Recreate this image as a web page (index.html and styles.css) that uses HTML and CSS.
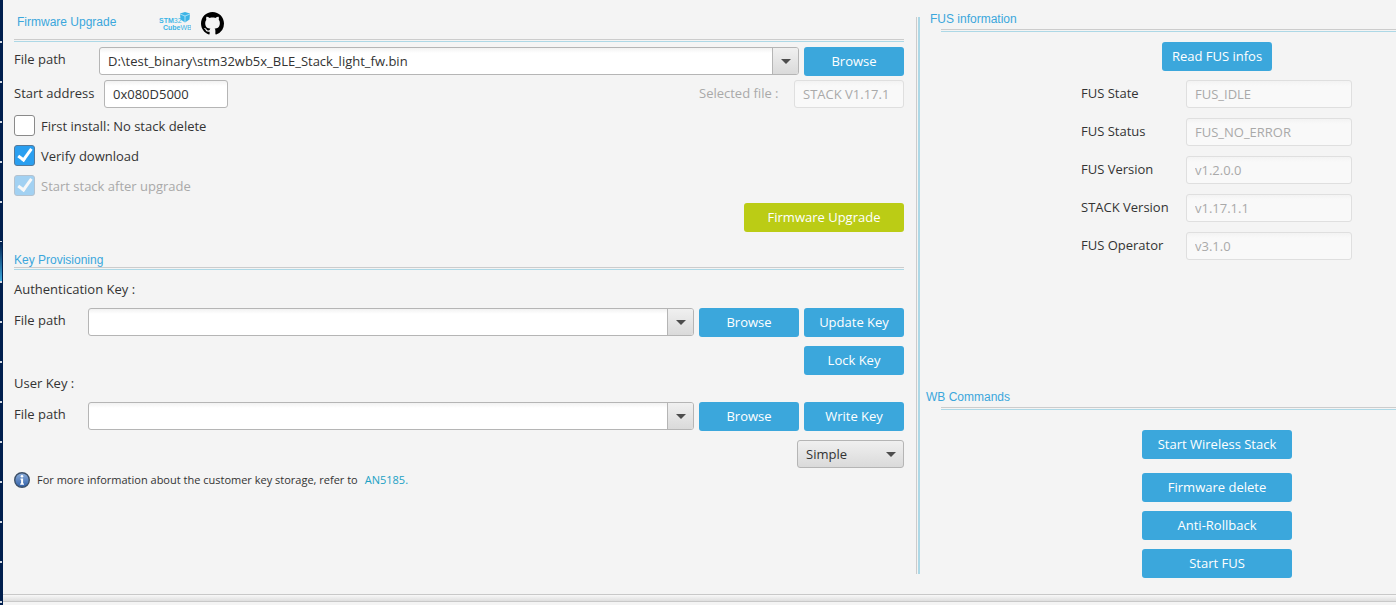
FILE: index.html
```html
<!DOCTYPE html>
<html lang="en">
<head>
<meta charset="UTF-8">
<meta name="viewport" content="width=device-width, initial-scale=1.0">
<title>Firmware Upgrade Services</title>
<link rel="stylesheet" href="styles.css">
</head>
<body>
<div class="window">
    <div class="sidebar"><div class="sidebar-active"></div></div>
    <div class="page">
        <main class="panels">
            <div class="left">
                <section>
                    <div class="title-row">
                        <h2>Firmware Upgrade</h2>
                        <svg class="cube-logo" width="32" height="20" viewBox="0 0 32 20" role="img" aria-label="STM32CubeWB">
                            <text x="0" y="11" font-size="7" font-weight="bold">STM<tspan font-weight="normal">32</tspan></text>
                            <text x="4" y="18" font-size="7" font-weight="bold">Cube<tspan font-weight="normal">WB</tspan></text>
                            <path d="M21 1.5 L26 0 L31 1.5 L30.5 7.5 L26 10.5 L21.5 7.5 Z"/>
                            <path class="cube-edge" d="M21 2 L26 4 L31 2 M26 4 V10"/>
                        </svg>
                        <svg class="github-logo" width="23" height="23" viewBox="0 0 16 16" role="img" aria-label="GitHub">
                            <path d="M8 0C3.58 0 0 3.58 0 8c0 3.54 2.29 6.53 5.47 7.59.4.07.55-.17.55-.38 0-.19-.01-.82-.01-1.49-2.01.37-2.53-.49-2.69-.94-.09-.23-.48-.94-.82-1.13-.28-.15-.68-.52-.01-.53.63-.01 1.08.58 1.23.82.72 1.21 1.87.87 2.33.66.07-.52.28-.87.51-1.07-1.78-.2-3.64-.89-3.64-3.95 0-.87.31-1.59.82-2.15-.08-.2-.36-1.02.08-2.12 0 0 .67-.21 2.2.82.64-.18 1.32-.27 2-.27s1.36.09 2 .27c1.53-1.04 2.2-.82 2.2-.82.44 1.1.16 1.92.08 2.12.51.56.82 1.27.82 2.15 0 3.07-1.87 3.75-3.65 3.95.29.25.54.73.54 1.48 0 1.07-.01 1.93-.01 2.2 0 .21.15.46.55.38A8.01 8.01 0 0 0 16 8c0-4.42-3.58-8-8-8z"/>
                        </svg>
                    </div>
                    <div class="rule"></div>

                    <div class="row firmware-path">
                        <label for="fwPath">File path</label>
                        <div class="combo">
                            <input type="text" id="fwPath" value="D:\test_binary\stm32wb5x_BLE_Stack_light_fw.bin">
                            <button type="button" aria-label="Recent firmware files"></button>
                        </div>
                        <button type="button" class="btn">Browse</button>
                    </div>
                    <div class="row address">
                        <label for="startAddress">Start address</label>
                        <input type="text" class="field" id="startAddress" value="0x080D5000">
                        <label for="selectedFile" class="selected-label">Selected file :</label>
                        <input type="text" class="field selected-file" id="selectedFile" value="STACK V1.17.1" disabled>
                    </div>

                    <div class="checks">
                        <label><input type="checkbox">First install: No stack delete</label>
                        <label><input type="checkbox" checked>Verify download</label>
                        <label class="disabled"><input type="checkbox" checked disabled>Start stack after upgrade</label>
                    </div>
                    <div class="row end">
                        <button type="button" class="btn upgrade">Firmware Upgrade</button>
                    </div>
                </section>

                <section class="keys">
                    <h2>Key Provisioning</h2>
                    <div class="rule"></div>

                    <h3>Authentication Key :</h3>
                    <div class="row key-path">
                        <label for="authKey">File path</label>
                        <div class="combo">
                            <input type="text" id="authKey">
                            <button type="button" aria-label="Recent authentication keys"></button>
                        </div>
                        <button type="button" class="btn">Browse</button>
                        <button type="button" class="btn">Update Key</button>
                    </div>
                    <div class="row end lock">
                        <button type="button" class="btn">Lock Key</button>
                    </div>

                    <h3 class="user-key">User Key :</h3>
                    <div class="row key-path">
                        <label for="userKey">File path</label>
                        <div class="combo">
                            <input type="text" id="userKey">
                            <button type="button" aria-label="Recent user keys"></button>
                        </div>
                        <button type="button" class="btn">Browse</button>
                        <button type="button" class="btn">Write Key</button>
                    </div>
                    <div class="row end key-type">
                        <div class="select">
                            <select aria-label="Key type">
                                <option>Simple</option>
                                <option>Master</option>
                                <option>Encrypted</option>
                            </select>
                        </div>
                    </div>

                    <p class="note">
                        <svg width="16" height="16" viewBox="0 0 16 16" aria-hidden="true">
                            <defs>
                                <linearGradient id="infoFill" x1="0" y1="0" x2="0" y2="1">
                                    <stop offset="0" stop-color="#8fb0dc"/>
                                    <stop offset="1" stop-color="#2f5fa8"/>
                                </linearGradient>
                            </defs>
                            <circle cx="8" cy="8" r="7.3" fill="url(#infoFill)" stroke="#3d5068" stroke-width="1.4"/>
                            <circle cx="8" cy="4.2" r="1.3" fill="#fff"/>
                            <path d="M6.5 6.5h2.6v5h.9v1.2H6.2v-1.2h.9V7.7h-.6z" fill="#fff"/>
                        </svg>
                        <span>For more information about the customer key storage, refer to</span>
                        <a href="#">AN5185.</a>
                    </p>
                </section>
            </div>

            <div class="divider"></div>

            <div class="right">
                <section class="fus">
                    <h2>FUS information</h2>
                    <div class="rule"></div>
                    <div class="centered">
                        <button type="button" class="btn read">Read FUS infos</button>
                        <div class="info">
                            <label for="fusState">FUS State</label>
                            <input type="text" class="field" id="fusState" value="FUS_IDLE" disabled>
                            <label for="fusStatus">FUS Status</label>
                            <input type="text" class="field" id="fusStatus" value="FUS_NO_ERROR" disabled>
                            <label for="fusVersion">FUS Version</label>
                            <input type="text" class="field" id="fusVersion" value="v1.2.0.0" disabled>
                            <label for="stackVersion">STACK Version</label>
                            <input type="text" class="field" id="stackVersion" value="v1.17.1.1" disabled>
                            <label for="fusOperator">FUS Operator</label>
                            <input type="text" class="field" id="fusOperator" value="v3.1.0" disabled>
                        </div>
                    </div>
                </section>
                <section class="commands">
                    <h2>WB Commands</h2>
                    <div class="rule"></div>
                    <div class="centered">
                        <button type="button" class="btn start-stack">Start Wireless Stack</button>
                        <button type="button" class="btn">Firmware delete</button>
                        <button type="button" class="btn">Anti-Rollback</button>
                        <button type="button" class="btn">Start FUS</button>
                    </div>
                </section>
            </div>
        </main>
        <div class="splitter"></div>
    </div>
</div>
</body>
</html>
```

FILE: styles.css
```css
* {
    box-sizing: border-box;
}
body {
    margin: 0;
    background-color: #f4f4f4;
    color: #333;
    font-family: "Open Sans", "Noto Sans", sans-serif;
    font-size: 13px;
}
input, button, select {
    font: inherit;
    color: inherit;
    margin: 0;
}
h2, h3 {
    margin: 0;
    font-size: 12px;
    font-weight: normal;
    line-height: 14px;
}
h2 {
    color: #3ba7dc;
    font-family: "Liberation Sans", Arial, sans-serif;
}
h3 {
    font-size: 13px;
    line-height: 17px;
}

.window {
    display: flex;
    min-height: 100vh;
}
.sidebar {
    width: 3px;
    padding-top: 242px;
    background: repeating-linear-gradient(#001f4e 0, #001f4e 38px, #d5dbe4 38px, #d5dbe4 40px);
    background-position: 0 3px;
    border-right: 1px solid #001f4e;
}
.sidebar-active {
    height: 39px;
    background: linear-gradient(#001f4e, #3ba7dc);
}
.page {
    flex: 1;
    display: flex;
    flex-direction: column;
}
.panels {
    flex: 1;
    display: flex;
    padding-left: 11px;
}
.left {
    flex: 1;
}
.divider {
    width: 4px;
    margin: 17px 0 20px 12px;
    border-left: 1px solid #ccc;
    border-right: 2px solid #add8e6;
}
.right {
    width: 476px;
}
.splitter {
    height: 8px;
    margin-bottom: 3px;
    border: solid #c8c8c8;
    border-width: 1px 0;
    background: linear-gradient(#f8f8f8, #dedede);
}
.rule {
    height: 3px;
    border-top: 1px solid #ccc;
    border-bottom: 1px solid #add8e6;
}

.title-row {
    display: flex;
    height: 39px;
    padding: 12px 3px 0;
}
.title-row h2 {
    width: 142px;
    line-height: 20px;
}
.cube-logo {
    fill: #3cb4e6;
    font-family: "Liberation Sans", Arial, sans-serif;
}
.cube-edge {
    fill: none;
    stroke: #d8f0fa;
    stroke-width: 0.7;
}
.github-logo {
    margin-left: 10px;
}

.row {
    display: flex;
    align-items: flex-start;
    gap: 5px;
}
.row label, .info label {
    line-height: 26px;
}
.end {
    justify-content: flex-end;
}
.firmware-path {
    margin-top: 5px;
}
.firmware-path label, .key-path label {
    width: 80px;
    line-height: 24px;
}
.key-path label {
    width: 69px;
}
.address {
    margin-top: 4px;
}
.address label {
    width: 85px;
}
#startAddress {
    width: 124px;
}
.address .selected-label {
    width: 90px;
    margin-left: auto;
    color: #a9a9a9;
}
.selected-file {
    width: 110px;
}

.field, .combo {
    height: 28px;
    border: 1px solid #b5b5b5;
    border-radius: 3px;
    background: linear-gradient(#f2f2f2, #fff 5px);
}
.field {
    padding: 0 8px;
}
.field:disabled {
    border-color: #dfdfdf;
    background: linear-gradient(#f3f3f3, #f9f9f9 5px);
    color: #a9a9a9;
}
.combo {
    flex: 1;
    display: flex;
}
.combo input {
    flex: 1;
    min-width: 0;
    padding: 0 8px;
    border: 0;
    background: none;
}
.combo button {
    width: 26px;
    padding: 0;
    border: 0;
    border-left: 1px solid #b5b5b5;
    border-radius: 0 2px 2px 0;
    background: linear-gradient(#f0f0f0, #dadada);
}
.combo button::after, .select::after {
    content: "";
    display: block;
    width: 0;
    margin: 0 auto;
    border: solid transparent;
    border-width: 5px 5px 0;
    border-top-color: #4d4d4d;
}

.btn {
    width: 100px;
    height: 29px;
    padding: 0 0 2px;
    border: 0;
    border-radius: 3px;
    background-color: #3ba7dc;
    color: #fff;
}
.btn.upgrade {
    width: 160px;
    background-color: #bbcc15;
}

.checks {
    display: flex;
    flex-direction: column;
    gap: 9px;
    margin-top: 7px;
}
.checks label {
    display: flex;
    align-items: center;
    gap: 6px;
    height: 21px;
}
.checks .disabled {
    color: #a9a9a9;
}
.checks input {
    display: flex;
    justify-content: center;
    width: 21px;
    height: 21px;
    appearance: none;
    border: 1px solid #8a8a8a;
    border-radius: 3px;
    background-color: #fff;
}
.checks input:checked {
    border-color: #55799a;
    background-color: #2a9ff0;
}
.checks input:checked::after {
    content: "";
    box-sizing: border-box;
    width: 8px;
    height: 15px;
    border: solid #fff;
    border-width: 0 3px 3px 0;
    transform: rotate(36deg);
}
.checks input:disabled {
    opacity: 0.4;
}
.checks + .row {
    margin-top: 7px;
}

.keys {
    margin-top: 21px;
}
.keys h3 {
    margin: 11px 0 10px;
}
.lock, .key-type {
    margin-top: 9px;
}
.keys .user-key {
    margin-top: 0;
}
.select {
    position: relative;
}
.select::after {
    position: absolute;
    top: 12px;
    right: 8px;
    pointer-events: none;
}
.select select {
    width: 107px;
    height: 28px;
    padding: 0 8px;
    appearance: none;
    border: 1px solid #b5b5b5;
    border-radius: 3px;
    background: linear-gradient(#f0f0f0, #dadada);
}
.note {
    display: flex;
    align-items: center;
    gap: 7px;
    margin: 4px 0 0;
    font-size: 11px;
    line-height: 16px;
}
.note a {
    color: #1ba1c4;
    text-decoration: none;
}

.right .rule {
    margin-left: 21px;
}
.fus {
    height: 378px;
    padding-top: 12px;
}
.fus h2 {
    padding-left: 10px;
}
.fus .rule, .commands .rule {
    margin-top: 3px;
}
.commands {
    padding-top: 12px;
}
.commands h2 {
    padding-left: 6px;
}
.centered {
    display: flex;
    flex-direction: column;
    align-items: center;
    gap: 9px;
    padding: 10px 0 0 118px;
}
.btn.read {
    width: 110px;
}
.info {
    display: grid;
    grid-template-columns: 105px 167px;
    row-gap: 10px;
}
.info .field {
    width: 166px;
}
.commands .centered {
    padding-top: 20px;
}
.commands .btn {
    width: 150px;
}
.commands .start-stack {
    margin-bottom: 5px;
}
```
